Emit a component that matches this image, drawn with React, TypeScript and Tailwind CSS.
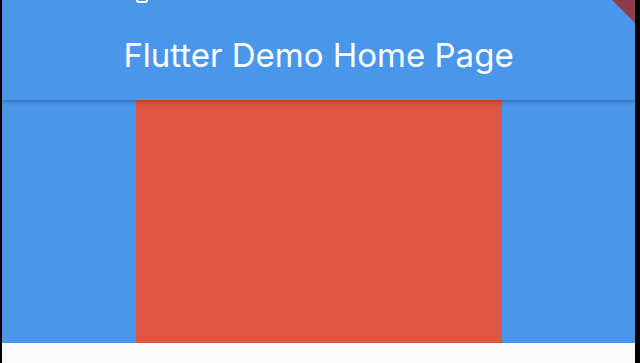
export default function App() {
  return (
    <div className="flex h-[363px] w-[640px] overflow-hidden bg-black">
      <div className="w-[2px] shrink-0 bg-black" />
      <div className="relative flex flex-1 flex-col">
        <header className="relative z-10 flex h-[100px] shrink-0 items-start justify-center bg-[#4a96eb] pt-[36px] shadow-[0_2px_4px_rgba(0,0,0,0.25)]">
          <div className="absolute left-[134px] top-[-3px] h-[6px] w-[12px] rounded-full border-2 border-white" />
          <h1
            className="text-[33px] leading-[38px] text-white"
            style={{ fontFamily: "Inter, Roboto, sans-serif" }}
          >
            Flutter Demo Home Page
          </h1>
        </header>
        <main className="flex flex-1 justify-center bg-[#4a96eb]">
          <div className="w-[366px] bg-[#e05441]" />
        </main>
        <footer className="h-[20px] shrink-0 bg-[#fbfbfb]" />
        <svg className="absolute right-0 top-0 z-20" width="24" height="24" viewBox="0 0 24 24">
          <polygon points="1,0 24,0 24,23" fill="#8f3b4c" />
        </svg>
      </div>
      <div className="w-[5px] shrink-0 bg-black" />
    </div>
  );
}
